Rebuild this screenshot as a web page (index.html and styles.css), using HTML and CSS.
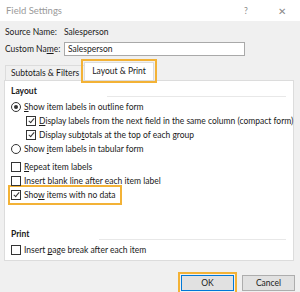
FILE: index.html
```html
<!DOCTYPE html>
<html lang="en">
<head>
    <meta charset="UTF-8">
    <title>Field Settings</title>
    <link rel="stylesheet" href="styles.css">
</head>
<body>
    <div class="dialog">
        <div class="titlebar">
            <span class="title">Field Settings</span>
            <span class="help">?</span>
            <span class="close">&#x2715;</span>
        </div>

        <div class="content">
            <div class="field-row">
                <span class="field-label">Source Name:</span>
                <span>Salesperson</span>
            </div>
            <div class="field-row">
                <span class="field-label">Custom Na<u>m</u>e:</span>
                <input type="text" class="name-input" value="Salesperson">
            </div>

            <div class="tabs">
                <div class="tab">Subtotals &amp; Filters</div>
                <div class="tab active highlight">Layout &amp; Print</div>
            </div>

            <div class="panel">
                <div class="group-head">
                    <span>Layout</span>
                    <span class="rule"></span>
                </div>

                <div class="option first">
                    <span class="radio checked"></span>
                    <span><u>S</u>how item labels in outline form</span>
                </div>
                <div class="option nested">
                    <span class="check checked"></span>
                    <span><u>D</u>isplay labels from the next field in the same column (compact form)</span>
                </div>
                <div class="option nested">
                    <span class="check checked"></span>
                    <span>Display sub<u>t</u>otals at the top of each group</span>
                </div>
                <div class="option">
                    <span class="radio"></span>
                    <span>Show <u>i</u>tem labels in tabular form</span>
                </div>

                <div class="option spaced">
                    <span class="check"></span>
                    <span><u>R</u>epeat item labels</span>
                </div>
                <div class="option">
                    <span class="check"></span>
                    <span>Insert <u>b</u>lank line after each item label</span>
                </div>
                <div class="option">
                    <span class="marked highlight">
                        <span class="check checked"></span>
                        <span>Sho<u>w</u> items with no data</span>
                    </span>
                </div>

                <div class="group-head print">
                    <span>Print</span>
                    <span class="rule"></span>
                </div>
                <div class="option first">
                    <span class="check"></span>
                    <span>Insert <u>p</u>age break after each item</span>
                </div>
            </div>

            <div class="buttons">
                <button class="btn default highlight">OK</button>
                <button class="btn">Cancel</button>
            </div>
        </div>
    </div>
</body>
</html>
```

FILE: styles.css
```css
* {
    margin: 0;
    padding: 0;
    box-sizing: border-box;
}

body {
    font-family: 'Lato', 'Roboto', sans-serif;
    font-size: 8.5px;
    color: #1a1a1a;
    background: #f0f0f0;
    width: 300px;
    height: 292px;
    overflow: hidden;
}

u {
    text-decoration-thickness: 1px;
    text-underline-offset: 1px;
}

.dialog {
    width: 300px;
    height: 292px;
    background: #f0f0f0;
}

.titlebar {
    height: 21px;
    background: #ffffff;
    display: flex;
    align-items: center;
    padding: 0 6px;
    color: #9a9a9a;
}

.title {
    flex: 1;
    font-size: 9.5px;
}

.help {
    width: 34px;
    font-size: 8.5px;
    color: #8a8a8a;
}

.close {
    width: 16px;
    font-size: 10px;
    color: #8a8a8a;
}

.content {
    padding: 4px 5px 0 4px;
}

.field-row {
    display: flex;
    align-items: center;
    height: 14px;
    padding-left: 1px;
    white-space: nowrap;
}

.field-row + .field-row {
    margin-top: 3px;
}

.field-label {
    width: 59px;
}

.name-input {
    width: 181px;
    height: 14px;
    border: 1px solid #a9a9a9;
    background: #ffffff;
    font-family: inherit;
    font-size: 8.5px;
    color: #1a1a1a;
    padding: 0 3px;
}

.tabs {
    display: flex;
    align-items: flex-end;
    height: 19px;
    margin-top: 5px;
    padding-left: 1px;
}

.tab {
    height: 15px;
    line-height: 15px;
    padding: 0 5px;
    border: 1px solid #dcdcdc;
    border-bottom: none;
    background: #f0f0f0;
    white-space: nowrap;
}

.tab.active {
    height: 18px;
    line-height: 17px;
    background: #ffffff;
    padding: 0 7px;
    margin-left: -1px;
    position: relative;
    z-index: 1;
}

.highlight {
    outline: 2px solid #f3b236;
    outline-offset: 1px;
}

.panel {
    width: 290px;
    background: #ffffff;
    border: 1px solid #dcdcdc;
    padding: 4px 7px 3px 6px;
}

.group-head {
    display: flex;
    align-items: flex-end;
    height: 12px;
    line-height: 12px;
    font-weight: bold;
}

.group-head.print {
    margin-top: 26px;
}

.rule {
    flex: 1;
    height: 1px;
    margin-left: 70px;
    background: #e8e8e8;
}

.option {
    display: flex;
    align-items: center;
    height: 14px;
    white-space: nowrap;
}

.option.first {
    margin-top: 3px;
}

.option.spaced {
    margin-top: 4px;
}

.option.nested {
    padding-left: 15px;
}

.marked {
    display: flex;
    align-items: center;
    height: 14px;
    padding-right: 3px;
}

.check,
.radio {
    width: 10px;
    height: 10px;
    border: 1px solid #333333;
    background: #ffffff;
    margin-right: 3px;
    flex-shrink: 0;
    position: relative;
}

.radio {
    border-radius: 50%;
}

.radio.checked::after {
    content: "";
    position: absolute;
    left: 2px;
    top: 2px;
    width: 4px;
    height: 4px;
    border-radius: 50%;
    background: #333333;
}

.check.checked::after {
    content: "";
    position: absolute;
    left: 3px;
    top: 0px;
    width: 2px;
    height: 5px;
    border: solid #333333;
    border-width: 0 1px 1px 0;
    transform: rotate(40deg);
}

.buttons {
    display: flex;
    justify-content: flex-end;
    gap: 8px;
    margin-top: 14px;
}

.btn {
    width: 53px;
    height: 16px;
    font-family: inherit;
    font-size: 8.5px;
    color: #1a1a1a;
    background: #e1e1e1;
    border: 1px solid #adadad;
}

.btn.default {
    border-color: #0078d7;
}
```
